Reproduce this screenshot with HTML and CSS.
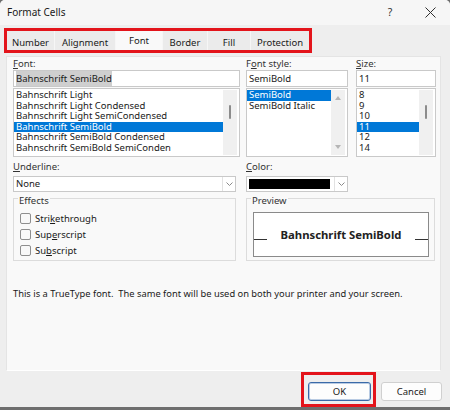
FILE: index.html
```html
<!DOCTYPE html>
<html lang="en">
<head>
    <meta charset="UTF-8">
    <title>Format Cells</title>
    <link rel="stylesheet" href="styles.css">
</head>
<body>
    <div class="window">
        <div class="titlebar">
            <span class="title">Format Cells</span>
            <span class="help">?</span>
            <span class="close">
                <svg width="11" height="11" viewBox="0 0 11 11"><path d="M0.5 0.5 L10.5 10.5 M10.5 0.5 L0.5 10.5" stroke="#303030" stroke-width="1" fill="none"/></svg>
            </span>
        </div>

        <div class="tabs-row">
            <div class="tabs">
                <div class="tab w-number">Number</div>
                <div class="tab w-align">Alignment</div>
                <div class="tab w-font active">Font</div>
                <div class="tab w-border">Border</div>
                <div class="tab w-fill">Fill</div>
                <div class="tab w-prot">Protection</div>
            </div>
        </div>

        <div class="panel">
            <div class="top">
                <div class="field col-font">
                    <label><u>F</u>ont:</label>
                    <div class="edit"><span class="picked">Bahnschrift SemiBold</span></div>
                    <div class="list">
                        <div class="items">
                            <div class="item">Bahnschrift Light</div>
                            <div class="item">Bahnschrift Light Condensed</div>
                            <div class="item">Bahnschrift Light SemiCondensed</div>
                            <div class="item sel">Bahnschrift SemiBold</div>
                            <div class="item">Bahnschrift SemiBold Condensed</div>
                            <div class="item">Bahnschrift SemiBold SemiConden</div>
                        </div>
                        <div class="scroll"><div class="thumb"></div></div>
                    </div>
                </div>
                <div class="field col-style">
                    <label>F<u>o</u>nt style:</label>
                    <div class="edit">SemiBold</div>
                    <div class="list">
                        <div class="items">
                            <div class="item sel">SemiBold</div>
                            <div class="item">SemiBold Italic</div>
                        </div>
                        <div class="scroll arrows">
                            <span class="arrow up"></span>
                            <span class="arrow down"></span>
                        </div>
                    </div>
                </div>
                <div class="field col-size">
                    <label><u>S</u>ize:</label>
                    <div class="edit">11</div>
                    <div class="list">
                        <div class="items">
                            <div class="item">8</div>
                            <div class="item">9</div>
                            <div class="item">10</div>
                            <div class="item sel">11</div>
                            <div class="item">12</div>
                            <div class="item">14</div>
                        </div>
                        <div class="scroll"><div class="thumb"></div></div>
                    </div>
                </div>
            </div>

            <div class="mid">
                <div class="mid-left">
                    <label><u>U</u>nderline:</label>
                    <div class="combo">
                        <span class="combo-text">None</span>
                        <span class="drop"><svg width="7" height="4" viewBox="0 0 7 4"><path d="M0.5 0.5 L3.5 3.5 L6.5 0.5" stroke="#8a8a8a" fill="none"/></svg></span>
                    </div>
                    <fieldset class="group effects">
                        <legend>Effects</legend>
                        <div class="check"><span class="box"></span>Stri<u>k</u>ethrough</div>
                        <div class="check"><span class="box"></span>Sup<u>e</u>rscript</div>
                        <div class="check"><span class="box"></span>Su<u>b</u>script</div>
                    </fieldset>
                </div>
                <div class="mid-right">
                    <label><u>C</u>olor:</label>
                    <div class="combo color-combo">
                        <span class="swatch"></span>
                        <span class="drop"><svg width="7" height="4" viewBox="0 0 7 4"><path d="M0.5 0.5 L3.5 3.5 L6.5 0.5" stroke="#8a8a8a" fill="none"/></svg></span>
                    </div>
                    <fieldset class="group preview">
                        <legend>Preview</legend>
                        <div class="preview-box">
                            <span class="preview-text">Bahnschrift SemiBold</span>
                        </div>
                    </fieldset>
                </div>
            </div>

            <p class="info">This is a TrueType font.&nbsp; The same font will be used on both your printer and your screen.</p>
        </div>

        <div class="footer">
            <div class="mark">
                <button class="btn btn-default">OK</button>
            </div>
            <button class="btn btn-cancel">Cancel</button>
        </div>
    </div>
</body>
</html>
```

FILE: styles.css
```css
* {
    margin: 0;
    padding: 0;
    box-sizing: border-box;
}

body {
    width: 450px;
    height: 410px;
    overflow: hidden;
    background: #6e6e6e;
    font-family: "Noto Sans", sans-serif;
    font-size: 9.5px;
    color: #1a1a1a;
}

.window {
    width: 450px;
    height: 407px;
    background: #eeeeee;
    border-radius: 5px 5px 0 0;
    display: flex;
    flex-direction: column;
}

.titlebar {
    height: 25px;
    background: #f6f6f6;
    border-radius: 5px 5px 0 0;
    display: flex;
    align-items: center;
    padding-left: 7px;
    padding-right: 10px;
    font-size: 10px;
}

.title {
    flex: 1;
}

.help {
    width: 20px;
    text-align: center;
    font-size: 10.5px;
    color: #333;
}

.close {
    width: 20px;
    margin-left: 20px;
    display: flex;
    justify-content: center;
}

.tabs-row {
    padding: 3px 0 0 4px;
}

.tabs {
    display: flex;
    width: 308px;
    height: 25px;
    border: 3px solid #e3141b;
    background: #ebebeb;
}

.tab {
    height: 19px;
    line-height: 19px;
    padding-top: 2px;
    text-align: center;
    border-left: 1px solid #f6f6f6;
}

.tab:first-child {
    border-left: none;
}

.tab.active {
    background: #f9f9f9;
    padding-top: 0;
}

.w-number { width: 47px; }
.w-align { width: 61px; }
.w-font { width: 47px; }
.w-border { width: 45px; }
.w-fill { width: 43px; }
.w-prot { width: 59px; }

.panel {
    margin: 3px 9px 0 6px;
    height: 316px;
    background: #f9f9f9;
    border: 1px solid #e4e4e4;
    border-bottom-color: #ffffff;
    padding: 0 4px 0 6px;
}

label {
    display: block;
    height: 13px;
    line-height: 13px;
    color: #333;
}

.top {
    display: flex;
}

.col-font { width: 227px; }
.col-style { width: 102px; margin-left: 6px; }
.col-size { width: 80px; margin-left: 8px; }

.edit {
    height: 17px;
    line-height: 15px;
    background: #fff;
    border: 1px solid #c9c9c9;
    padding-left: 2px;
    white-space: nowrap;
}

.picked {
    background: #cfcfcf;
    padding: 1px 0;
}

.list {
    height: 69px;
    margin-top: 1px;
    background: #fff;
    border: 1px solid #c9c9c9;
    display: flex;
    padding: 1px 2px 1px 0;
}

.items {
    flex: 1;
    min-width: 0;
}

.item {
    height: 10.6px;
    line-height: 10.6px;
    padding-left: 2px;
    white-space: nowrap;
}

.item.sel {
    background: #0078d7;
    color: #fff;
}

.scroll {
    width: 14px;
    background: #f0f0f0;
}

.thumb {
    width: 2px;
    height: 14px;
    margin: 15px auto 0;
    background: #8c8c8c;
    border-radius: 1px;
}

.arrows {
    display: flex;
    flex-direction: column;
    align-items: center;
    justify-content: space-between;
    padding: 6px 0 6px;
}

.arrow {
    width: 0;
    height: 0;
    border-left: 3.5px solid transparent;
    border-right: 3.5px solid transparent;
}

.arrow.up {
    border-bottom: 4px solid #b5b5b5;
}

.arrow.down {
    border-top: 4px solid #b5b5b5;
}

.mid {
    display: flex;
    margin-top: 3px;
}

.mid-left { width: 223px; }
.mid-right { width: 189px; margin-left: 10px; }

.combo {
    height: 16px;
    margin-top: 3px;
    background: #fff;
    border: 1px solid #c9c9c9;
    display: flex;
    align-items: center;
}

.combo-text {
    flex: 1;
    padding-left: 2px;
}

.drop {
    width: 13px;
    height: 14px;
    border-left: 1px solid #e2e2e2;
    display: flex;
    align-items: center;
    justify-content: center;
}

.color-combo {
    width: 102px;
}

.swatch {
    flex: 1;
    height: 10px;
    margin: 0 4px 0 2px;
    background: #000;
}

.group {
    border: 1px solid #dcdcdc;
    min-width: 0;
}

.group legend {
    margin-left: -2px;
    padding: 4px 1px 0;
    line-height: 10px;
    color: #333;
}

.effects {
    padding: 5px 0 1px 6px;
}

.check {
    height: 16px;
    display: flex;
    align-items: center;
}

.box {
    width: 11px;
    height: 11px;
    border: 1px solid #8e8e8e;
    border-radius: 2px;
    background: #f8f8f8;
    margin-right: 4px;
}

.preview {
    padding: 6px 6px 3px 6px;
}

.preview-box {
    height: 45px;
    width: 176px;
    background: #fff;
    border: 1px solid #8a8a8a;
    display: flex;
    justify-content: space-between;
    align-items: center;
}

.preview-box::before,
.preview-box::after {
    content: "";
    width: 13px;
    height: 1px;
    background: #333;
    margin-top: 11px;
}

.preview-text {
    font-weight: bold;
    font-size: 11.3px;
    color: #222;
}

.info {
    margin-top: 27px;
    line-height: 12px;
    font-size: 9.33px;
}

.footer {
    display: flex;
    justify-content: flex-end;
    align-items: flex-start;
    padding: 1px 8px 0 0;
}

.mark {
    border: 3px solid #e3141b;
    padding: 7px 2px 3px 4px;
}

.btn {
    height: 19px;
    font-family: "Noto Sans", sans-serif;
    font-size: 9.5px;
    color: #1a1a1a;
    background: #fdfdfd;
    border-radius: 3px;
}

.btn-default {
    width: 63px;
    border: 1px solid #3a6aa8;
    box-shadow: inset 0 0 0 1px #b9cbe3;
}

.btn-cancel {
    width: 61px;
    margin: 10px 0 0 5px;
    border: 1px solid #d0d0d0;
}
```
